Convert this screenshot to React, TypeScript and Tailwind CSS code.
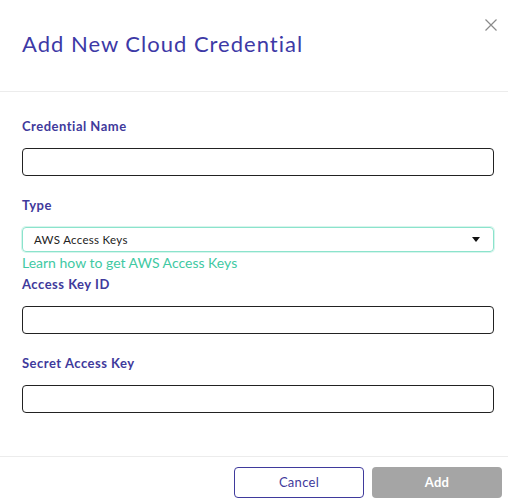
import React from "react";

function Label({ children }: { children: React.ReactNode }) {
  return <div className="text-[13px] font-bold leading-[16px] tracking-[0.5px] text-[#3f3a9c]">{children}</div>;
}

export default function App() {
  return (
    <div className="w-[508px] h-[504px] bg-white relative overflow-hidden" style={{ fontFamily: "Lato, 'Open Sans', sans-serif" }}>
      <button className="absolute left-[485px] top-[19px] w-[12px] h-[12px] text-[#8a8a8a]">
        <svg viewBox="0 0 12 12" width="12" height="12" fill="none" stroke="currentColor" strokeWidth="1.2">
          <path d="M0.5 0.5 L11.5 11.5 M11.5 0.5 L0.5 11.5" />
        </svg>
      </button>
      <div className="h-[92px] border-b border-[#ececec] pl-[22px] pt-[30px]">
        <h1 className="text-[22px] leading-[28px] tracking-[1px] text-[#3d39a6] font-normal">Add New Cloud Credential</h1>
      </div>
      <div className="pl-[22px] pr-[14px] pt-[26px] h-[365px] border-b border-[#ececec]">
        <Label>Credential Name</Label>
        <div className="mt-[14px] h-[28px] rounded-[4px] border border-[#222] bg-white" />
        <div className="mt-[21px]">
          <Label>Type</Label>
        </div>
        <div className="mt-[14px] h-[25px] rounded-[4px] border border-[#8be3cc] shadow-[0_0_0_1px_#d6f5ec] flex items-center justify-between pl-[11px] pr-[13px]">
          <span className="text-[11.5px] tracking-[0.3px] text-[#222]">AWS Access Keys</span>
          <svg width="8" height="5" viewBox="0 0 8 5"><path d="M0 0 H8 L4 5 Z" fill="#111" /></svg>
        </div>
        <div className="mt-[2px] text-[14px] leading-[17px] text-[#3fc9a3]">Learn how to get AWS Access Keys</div>
        <div className="mt-[5px]">
          <Label>Access Key ID</Label>
        </div>
        <div className="mt-[14px] h-[28px] rounded-[4px] border border-[#222] bg-white" />
        <div className="mt-[21px]">
          <Label>Secret Access Key</Label>
        </div>
        <div className="mt-[14px] h-[28px] rounded-[4px] border border-[#222] bg-white" />
      </div>
      <div className="flex justify-end gap-[8px] pr-[6px] pt-[10px]">
        <button className="w-[130px] h-[31px] rounded-[4px] border border-[#3f3a9c] text-[13px] tracking-[0.3px] text-[#3f3a9c] bg-white">Cancel</button>
        <button className="w-[130px] h-[31px] rounded-[4px] bg-[#a5a5a5] text-[13px] tracking-[0.3px] text-white font-bold">Add</button>
      </div>
    </div>
  );
}
